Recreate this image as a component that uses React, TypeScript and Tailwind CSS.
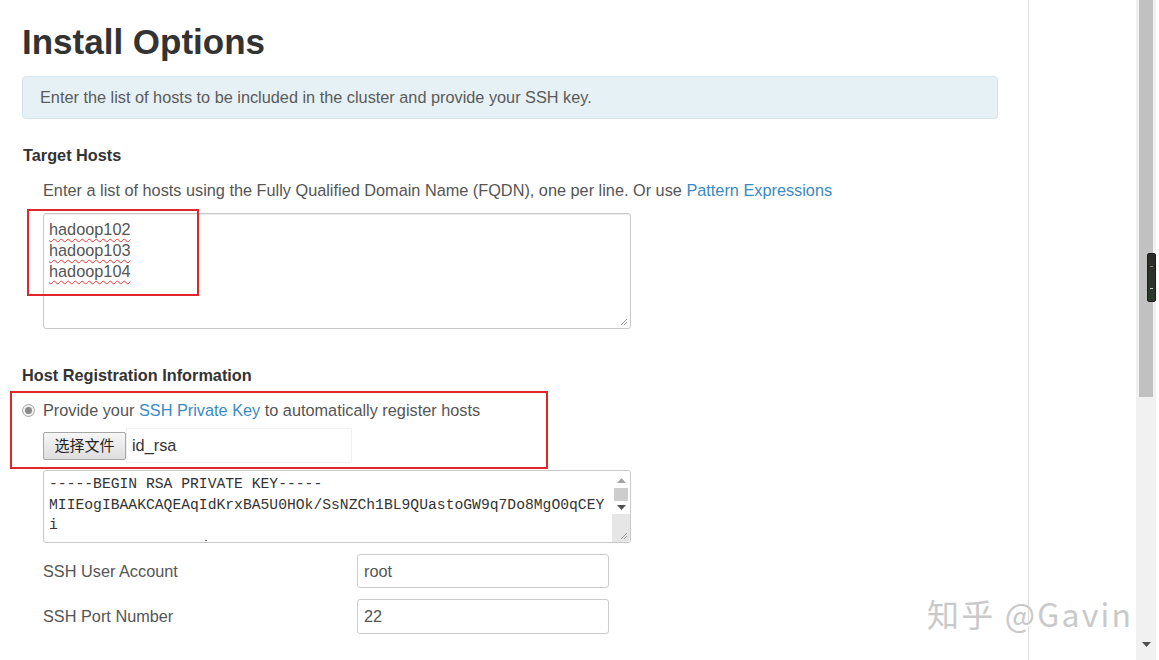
import React from "react";

const Grip = () => (
  <svg width="9" height="9" viewBox="0 0 9 9" className="absolute right-[2px] bottom-[2px]">
    <line x1="8" y1="2" x2="2" y2="8" stroke="#999" strokeWidth="1" />
    <line x1="8" y1="5" x2="5" y2="8" stroke="#999" strokeWidth="1" />
  </svg>
);

export default function App() {
  return (
    <div className="relative w-[1159px] h-[660px] overflow-hidden bg-white font-['Liberation_Sans',Arial,sans-serif] text-[16.3px] text-[#555]">
      <div className="flex h-full">
        {/* main column */}
        <div className="w-[1029px] h-full border-r border-[#dedede] pl-[22px] shrink-0">
          <h1 className="mt-[22px] text-[35px] leading-[39px] font-bold text-[#333]">Install Options</h1>

          <div className="mt-[15px] w-[976px] h-[43px] border border-[#d3e5ee] bg-[#e6f1f6] rounded-[4px] pl-[17px] flex items-center text-[#5a5a5a]">
            Enter the list of hosts to be included in the cluster and provide your SSH key.
          </div>

          <div className="mt-[25px] ml-[1px] leading-[22px] font-bold text-[#333]">Target Hosts</div>

          <div className="mt-[13px] ml-[21px] leading-[22px]">
            Enter a list of hosts using the Fully Qualified Domain Name (FQDN), one per line. Or use{" "}
            <span className="text-[#3a8ac4]">Pattern Expressions</span>
          </div>

          <div className="relative mt-[12px] ml-[21px] w-[588px] h-[116px] border border-[#c8c8c8] rounded-[3px] shadow-[inset_0_1px_1px_rgba(0,0,0,0.075)] pl-[5px] pt-[5px] leading-[21px] text-[#555]">
            <div><span className="underline decoration-wavy decoration-[#e53935] decoration-1 underline-offset-[3px]">hadoop102</span></div>
            <div><span className="underline decoration-wavy decoration-[#e53935] decoration-1 underline-offset-[3px]">hadoop103</span></div>
            <div><span className="underline decoration-wavy decoration-[#e53935] decoration-1 underline-offset-[3px]">hadoop104</span></div>
            <Grip />
          </div>

          <div className="mt-[35px] leading-[22px] font-bold text-[#333]">Host Registration Information</div>

          <div className="mt-[13px] flex items-center h-[22px]">
            <span className="w-[13px] h-[13px] rounded-full border border-[#a9a9a9] bg-[#eeeeee] flex items-center justify-center">
              <span className="w-[7px] h-[7px] rounded-full bg-[#8a8a8a]" />
            </span>
            <span className="ml-[8px]">
              Provide your <span className="text-[#3a8ac4]">SSH Private Key</span> to automatically register hosts
            </span>
          </div>

          <div className="mt-[7px] ml-[21px] flex items-center h-[35px]">
            <div className="w-[83px] h-[28px] border border-[#a6a6a6] rounded-[2px] bg-gradient-to-b from-[#f6f6f6] to-[#dedede] flex items-center justify-center text-[15px] text-[#222] font-['Noto_Sans_CJK_SC',sans-serif]">
              选择文件
            </div>
            <div className="w-[226px] h-[35px] border border-[#f1f1f1] pl-[5px] flex items-center text-[#333]">id_rsa</div>
          </div>

          <div className="relative mt-[7px] ml-[21px] w-[588px] h-[73px] border border-[#c8c8c8] rounded-[3px] overflow-hidden">
            <div className="pl-[5px] pt-[3px] pr-[20px] font-['Liberation_Mono',monospace] text-[14.7px] leading-[20.5px] text-[#333] whitespace-pre">
              <div>-----BEGIN RSA PRIVATE KEY-----</div>
              <div>MIIEogIBAAKCAQEAqIdKrxBA5U0HOk/SsNZCh1BL9QUastoGW9q7Do8MgO0qCEY</div>
              <div>i</div>
            </div>
            <span className="absolute left-[161px] bottom-[1px] w-[2px] h-[1px] bg-[#777]" />
            <div className="absolute right-0 top-0 w-[18px] h-full bg-white flex flex-col items-center">
              <svg width="9" height="6" viewBox="0 0 9 6" className="mt-[7px]"><path d="M4.5 0 L9 5 L0 5 Z" fill="#a3a3a3" /></svg>
              <div className="mt-[4px] w-[14px] h-[13px] bg-[#cdcdcd]" />
              <svg width="9" height="6" viewBox="0 0 9 6" className="mt-[4px]"><path d="M0 0 L9 0 L4.5 5 Z" fill="#505050" /></svg>
              <div className="mt-[3px] w-full flex-1 bg-[#e6e6e6]" />
            </div>
            <Grip />
          </div>

          <div className="mt-[11px] ml-[21px] flex items-center h-[34px]">
            <div className="w-[314px]">SSH User Account</div>
            <div className="w-[252px] h-[34px] border border-[#cccccc] rounded-[3px] pl-[6px] flex items-center text-[#555]">root</div>
          </div>
          <div className="mt-[11px] ml-[21px] flex items-center h-[35px]">
            <div className="w-[314px]">SSH Port Number</div>
            <div className="w-[252px] h-[35px] border border-[#cccccc] rounded-[3px] pl-[6px] flex items-center text-[#555]">22</div>
          </div>
        </div>

        <div className="flex-1" />

        {/* page scrollbar */}
        <div className="relative w-[20px] h-full bg-[#f1f1f1] flex flex-col">
          <div className="ml-[3px] w-[14px] h-[397px] bg-[#c1c1c1]" />
          <div className="flex-1" />
          <svg width="9" height="6" viewBox="0 0 9 6" className="ml-[6px] mb-[12px]"><path d="M0 0 L9 0 L4.5 5 Z" fill="#505050" /></svg>
        </div>
        <div className="w-[3px]" />
      </div>

      {/* floating widget */}
      <div className="absolute left-[1147px] top-[253px] w-[9px] h-[49px] rounded-[2px] bg-gradient-to-b from-[#2d2a28] to-[#2a3a2c] border border-[#1c1c1c] flex flex-col items-center justify-between py-[12px]">
        <span className="w-[3px] h-[1px] bg-[#8a8a6a]" />
        <span className="w-[3px] h-[1px] bg-[#cfcfcf]" />
      </div>

      {/* red annotation boxes */}
      <div className="absolute left-[27px] top-[209px] w-[172px] h-[87px] border-2 border-[#e0262b]" />
      <div className="absolute left-[10px] top-[391px] w-[538px] h-[78px] border-2 border-[#e0262b]" />

      {/* watermark */}
      <div className="absolute left-[927px] top-[591px] text-[32px] leading-[44px] text-[#c9c9c9] font-['Noto_Sans_CJK_SC',sans-serif] tracking-[2.2px] whitespace-nowrap [text-shadow:0_0_1px_#ffffff,1px_1px_0_#ffffff]">
        知乎 @Gavin
      </div>
    </div>
  );
}
